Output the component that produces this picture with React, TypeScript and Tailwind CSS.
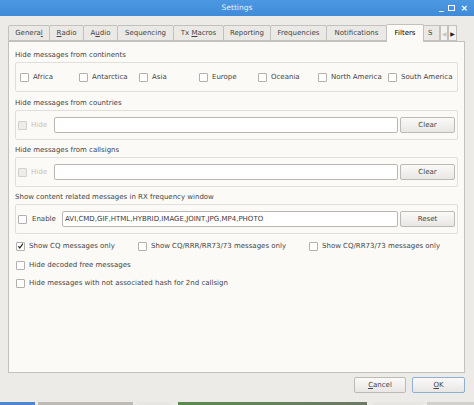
import React from "react";

const font = { fontFamily: '"DejaVu Sans", "Liberation Sans", sans-serif' };

const Ul = ({ children }: { children: React.ReactNode }) => <span className="underline underline-offset-[1px]">{children}</span>;

const Box = ({ checked = false, disabled = false }: { checked?: boolean; disabled?: boolean }) => (
  <span
    className={`inline-flex items-center justify-center w-[9px] h-[9px] shrink-0 rounded-[1px] border ${
      disabled ? "border-[#d4d1cc] bg-[#efede9]" : "border-[#b4b1ac] bg-white"
    }`}
  >
    {checked && (
      <svg viewBox="0 0 10 10" className="w-[8px] h-[8px]">
        <path d="M2 5.2 L4 8 L8.4 1.6" fill="none" stroke="#222" strokeWidth="1.6" />
      </svg>
    )}
  </span>
);

const Check = ({ label, checked, className = "" }: { label: string; checked?: boolean; className?: string }) => (
  <div className={`flex items-center gap-[4px] ${className}`}>
    <Box checked={checked} />
    <span className="text-[#444]">{label}</span>
  </div>
);

const Btn = ({ children, w = "w-[55px]", focus = false }: { children: React.ReactNode; w?: string; focus?: boolean }) => (
  <div
    className={`${w} h-[16px] flex items-center justify-center rounded-[2px] border bg-gradient-to-b from-[#fbfaf9] to-[#e9e7e4] text-[#444] ${
      focus ? "border-[#8fb0d3]" : "border-[#bdbab5]"
    }`}
  >
    {children}
  </div>
);

const Field = ({ children }: { children?: React.ReactNode }) => (
  <div className="flex-1 h-[16px] bg-white border border-[#bab7b2] rounded-[2px] flex items-center px-[2px] text-[#3a3a3a] whitespace-nowrap overflow-hidden">
    {children}
  </div>
);

const Label = ({ children, className = "" }: { children: React.ReactNode; className?: string }) => (
  <div className={`h-[10px] leading-[10px] text-[#444] ${className}`}>{children}</div>
);

const Group = ({ children, className = "" }: { children: React.ReactNode; className?: string }) => (
  <div className={`h-[30px] border border-[#e2dfda] rounded-[2px] flex items-center ${className}`}>{children}</div>
);

const tabs: { w: string; label: React.ReactNode; active?: boolean }[] = [
  { w: "w-[42px]", label: <>Genera<Ul>l</Ul></> },
  { w: "w-[35px]", label: <><Ul>R</Ul>adio</> },
  { w: "w-[35px]", label: <>A<Ul>u</Ul>dio</> },
  { w: "w-[57px]", label: <>Sequencing</> },
  { w: "w-[51px]", label: <>{"Tx\u00a0"}<Ul>M</Ul>acros</> },
  { w: "w-[48px]", label: <>Reportin<Ul>g</Ul></> },
  { w: "w-[57px]", label: <>Frequencies</> },
  { w: "w-[61px]", label: <>Notifications</> },
  { w: "w-[38px]", label: <>Filters</>, active: true },
];

export default function App() {
  return (
    <div className="w-[474px] h-[405px] bg-[#edebe8] flex flex-col overflow-hidden text-[7px]" style={font}>
      {/* Title bar */}
      <div className="h-[16px] bg-gradient-to-b from-[#4d98e2] to-[#3f8bd8] flex items-center relative shrink-0">
        <span className="flex-1 text-center text-[#e8f1fb] text-[7.5px]">Settings</span>
        <div className="absolute right-[6px] top-0 h-[16px] flex items-center gap-[5px] text-white text-[9px] font-bold">
          <span className="leading-none -mt-[2px]">_</span>
          <span className="w-[7px] h-[6px] border border-white" />
          <span className="leading-none">×</span>
        </div>
      </div>

      <div className="flex-1 flex flex-col px-[8px] pt-[8px]">
        {/* Tabs */}
        <div className="h-[17px] flex items-end">
          {tabs.map((t, i) => (
            <div
              key={i}
              className={`${t.w} flex items-center justify-center border border-[#c4c1bc] rounded-t-[2px] -mr-px whitespace-nowrap ${
                t.active ? "h-[18px] bg-[#fbfaf7] border-b-0 relative z-10 -mb-px" : "h-[16px] bg-[#ebe9e5] text-[#444]"
              }`}
            >
              {t.label}
            </div>
          ))}
          <div className="w-[17px] h-[16px] border border-[#c4c1bc] bg-[#ebe9e5] flex items-center pl-[4px] text-[#444]">S</div>
          <div className="w-[8px] h-[16px] border border-[#c4c1bc] bg-[#f3f2ef] flex items-center justify-center text-[#c9c6c1] text-[6px]">◀</div>
          <div className="w-[9px] h-[16px] border border-[#c4c1bc] bg-[#f3f2ef] flex items-center justify-center text-[#222] text-[6px]">▶</div>
        </div>

        {/* Panel */}
        <div className="h-[332px] w-[457px] bg-[#fbfaf7] border border-[#c4c1bc] px-[6px] pt-[8px] flex flex-col">
          <Label>Hide messages from continents</Label>
          <Group className="mt-[2px] pl-[4px]">
            <Check label="Africa" className="w-[59px]" />
            <Check label="Antarctica" className="w-[60px]" />
            <Check label="Asia" className="w-[60px]" />
            <Check label="Europe" className="w-[59px]" />
            <Check label="Oceania" className="w-[60px]" />
            <Check label="North America" className="w-[70px]" />
            <Check label="South America" />
          </Group>

          <Label className="mt-[6px]">Hide messages from countries</Label>
          <Group className="mt-[2px] pl-[2px] pr-[2px] gap-[2px]">
            <div className="flex items-center gap-[4px] w-[34px]">
              <Box disabled />
              <span className="text-[#c4c1bc]">Hide</span>
            </div>
            <Field />
            <Btn>Clear</Btn>
          </Group>

          <Label className="mt-[5px]">Hide messages from callsigns</Label>
          <Group className="mt-[2px] pl-[2px] pr-[2px] gap-[2px]">
            <div className="flex items-center gap-[4px] w-[34px]">
              <Box disabled />
              <span className="text-[#c4c1bc]">Hide</span>
            </div>
            <Field />
            <Btn>Clear</Btn>
          </Group>

          <Label className="mt-[5px]">Show content related messages in RX frequency window</Label>
          <Group className="mt-[2px] pl-[2px] pr-[2px] gap-[2px]">
            <div className="flex items-center gap-[5px] w-[42px]">
              <Box />
              <span className="text-[#444]">Enable</span>
            </div>
            <Field>AVI,CMD,GIF,HTML,HYBRID,IMAGE,JOINT,JPG,MP4,PHOTO</Field>
            <Btn>Reset</Btn>
          </Group>

          <div className="mt-[7px] h-[10px] flex items-center pl-[1px]">
            <Check label="Show CQ messages only" checked className="w-[122px]" />
            <Check label="Show CQ/RRR/RR73/73 messages only" className="w-[171px]" />
            <Check label="Show CQ/RR73/73 messages only" />
          </div>
          <div className="mt-[9px] h-[10px] flex items-center pl-[1px]">
            <Check label="Hide decoded free messages" />
          </div>
          <div className="mt-[8px] h-[10px] flex items-center pl-[1px]">
            <Check label="Hide messages with not associated hash for 2nd callsign" />
          </div>
        </div>

        {/* Dialog buttons */}
        <div className="mt-[4px] w-[457px] flex justify-end gap-[6px]">
          <Btn w="w-[52px]"><Ul>C</Ul>ancel</Btn>
          <Btn w="w-[53px]" focus><Ul>O</Ul>K</Btn>
        </div>
      </div>

      {/* Taskbar sliver */}
      <div className="h-[3px] flex shrink-0 bg-[#ecebe8]">
        <div className="w-[35px] bg-[#4f86d0]" />
        <div className="w-[3px]" />
        <div className="w-[95px] bg-[#bdbab5]" />
        <div className="w-[4px]" />
        <div className="w-[33px] bg-[#e7e6e2]" />
        <div className="w-[8px]" />
        <div className="w-[189px] bg-gradient-to-r from-[#5a8a4e] to-[#6d7a66]" />
        <div className="w-[6px]" />
        <div className="w-[50px] bg-[#e7e6e2]" />
        <div className="w-[4px]" />
        <div className="flex-1 bg-[#d2d0cc]" />
      </div>
    </div>
  );
}
